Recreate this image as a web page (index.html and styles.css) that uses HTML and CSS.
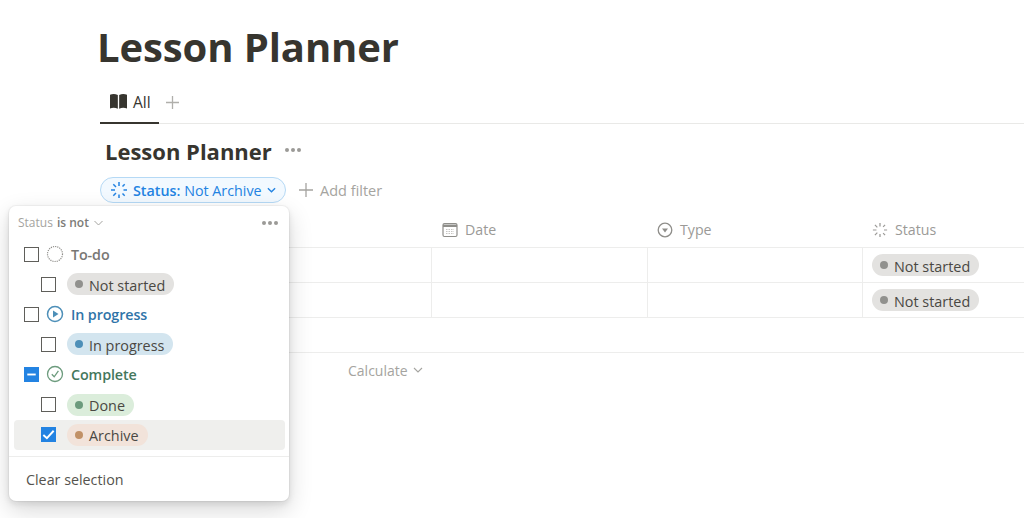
FILE: index.html
```html
<!DOCTYPE html>
<html lang="en">
<head>
  <meta charset="UTF-8" />
  <title>Lesson Planner</title>
  <link rel="stylesheet" href="styles.css">
</head>
<body>
  <div class="page">
    <h1 class="page-title">Lesson Planner</h1>

    <div class="tabs">
      <div class="tab active">
        <svg class="tab-icon" viewBox="0 0 20 18"><path d="M1 1.800C3.600 0.800 6.600 0.800 9.300 2V16.600C6.600 15.400 3.600 15.400 1 16.400ZM19 1.800C16.400 0.800 13.400 0.800 10.700 2V16.600C13.400 15.400 16.400 15.400 19 16.400Z"/></svg>
        <span>All</span>
      </div>
      <svg class="tab-add" viewBox="0 0 14 14"><path d="M7 0V14M0 7H14"/></svg>
    </div>

    <div class="view-head">
      <h2 class="view-title">Lesson Planner</h2>
      <div class="dots"><i></i><i></i><i></i></div>
    </div>

    <div class="filters">
      <div class="filter-pill">
        <svg class="spin-icon" viewBox="0 0 18 18"><path d="M9 1V5M9 13.500V17M1 9H5M13.500 9H17M3.300 3.300L6 6M12.500 12.500L14.700 14.700M3.300 14.700L6 12M12.500 5.500L14.700 3.300"/></svg>
        <span class="filter-text"><b>Status:</b> Not Archive</span>
        <svg class="chev" viewBox="0 0 10 6"><path d="M1 1L5 5L9 1"/></svg>
      </div>
      <div class="add-filter">
        <svg class="add-icon" viewBox="0 0 14 14"><path d="M7 0V14M0 7H14"/></svg>
        <span>Add filter</span>
      </div>
    </div>

    <div class="table">
      <div class="row head">
        <div class="cell name"></div>
        <div class="cell date">
          <svg class="col-icon" viewBox="0 0 16 16"><rect x="1" y="1.500" width="14" height="13" rx="1.500" class="cal"/><path d="M1 2.500H15V5H1Z" class="cal-top"/><path d="M4 7.500H12M4 9.500H12M4 11.500H12" class="cal-grid"/></svg>
          <span>Date</span>
        </div>
        <div class="cell">
          <svg class="col-icon" viewBox="0 0 16 16"><circle cx="8" cy="8" r="6.800" class="ring"/><path d="M5 6.500H11L8 10.500Z" class="fill"/></svg>
          <span>Type</span>
        </div>
        <div class="cell">
          <svg class="col-icon spin-grey" viewBox="0 0 18 18"><path d="M9 1V5M9 13.500V17M1 9H5M13.500 9H17M3.300 3.300L6 6M12.500 12.500L14.700 14.700M3.300 14.700L6 12M12.500 5.500L14.700 3.300"/></svg>
          <span>Status</span>
        </div>
      </div>
      <div class="row">
        <div class="cell name"></div>
        <div class="cell"></div>
        <div class="cell"></div>
        <div class="cell"><span class="tag grey"><i></i>Not started</span></div>
      </div>
      <div class="row">
        <div class="cell name"></div>
        <div class="cell"></div>
        <div class="cell"></div>
        <div class="cell"><span class="tag grey"><i></i>Not started</span></div>
      </div>
      <div class="row blank"></div>
      <div class="calc">
        <span>Calculate</span>
        <svg class="calc-chev" viewBox="0 0 10 6"><path d="M1 1L5 5L9 1"/></svg>
      </div>
    </div>
  </div>

  <!-- status filter menu -->
  <div class="menu">
    <div class="menu-head">
      <div class="menu-label">Status <b>is not</b>
        <svg class="menu-chev" viewBox="0 0 10 6"><path d="M1 1L5 5L9 1"/></svg>
      </div>
      <div class="dots small"><i></i><i></i><i></i></div>
    </div>

    <div class="menu-list">
      <div class="opt">
        <span class="box"></span>
        <svg class="state-icon" viewBox="0 0 18 18"><circle cx="9" cy="9" r="7.500" class="dotted"/></svg>
        <span class="group-name todo">To-do</span>
      </div>
      <div class="opt sub">
        <span class="box"></span>
        <span class="tag grey"><i></i>Not started</span>
      </div>
      <div class="opt">
        <span class="box"></span>
        <svg class="state-icon" viewBox="0 0 18 18"><circle cx="9" cy="9" r="7.500" class="ring-blue"/><path d="M7 5.500L12.500 9L7 12.500Z" class="play"/></svg>
        <span class="group-name prog">In progress</span>
      </div>
      <div class="opt sub">
        <span class="box"></span>
        <span class="tag blue"><i></i>In progress</span>
      </div>
      <div class="opt">
        <span class="box checked">
          <svg viewBox="0 0 16 16"><path d="M3.500 8H12.500"/></svg>
        </span>
        <svg class="state-icon" viewBox="0 0 18 18"><circle cx="9" cy="9" r="7.500" class="ring-green"/><path d="M5.800 9.200L8.200 11.800L12.400 5.800" class="tick"/></svg>
        <span class="group-name done">Complete</span>
      </div>
      <div class="opt sub">
        <span class="box"></span>
        <span class="tag green"><i></i>Done</span>
      </div>
      <div class="opt sub hover">
        <span class="box checked">
          <svg viewBox="0 0 16 16"><path d="M2.500 8.500L6.300 12L13.500 4"/></svg>
        </span>
        <span class="tag brown"><i></i>Archive</span>
      </div>
    </div>

    <div class="menu-foot">Clear selection</div>
  </div>
</body>
</html>
```

FILE: styles.css
```css
html, body {
  margin: 0;
  padding: 0;
  height: 518px;
  overflow: hidden;
  background: #fff;
  font-family: "Open Sans", "Noto Sans", sans-serif;
  color: #37352f;
}
.page {
  padding-left: 100px;
}
.page-title {
  margin: 0 0 0 -3px;
  height: 88px;
  padding-top: 20px;
  box-sizing: border-box;
  font-size: 40px;
  line-height: 54px;
  font-weight: 700;
  letter-spacing: -0.1px;
  color: #37352f;
}
.tabs {
  display: flex;
  align-items: center;
  height: 36px;
  box-sizing: border-box;
  border-bottom: 1px solid #e9e9e7;
}
.tab {
  display: flex;
  align-items: center;
  gap: 5px;
  box-sizing: border-box;
  width: 59px;
  height: 36px;
  padding: 1px 0 6px 9px;
  border-bottom: 2px solid #37352f;
  font-size: 15.500px;
}
.tab-icon {
  width: 19px;
  height: 17px;
  margin-top: -1px;
  fill: #37352f;
}
.tab-add {
  width: 13px;
  height: 13px;
  margin: -6px 0 0 7px;
  stroke: #b0afab;
  stroke-width: 1.400;
  fill: none;
}
.view-head {
  display: flex;
  align-items: center;
  height: 53px;
  padding: 0 0 0 5px;
  box-sizing: border-box;
  gap: 13px;
}
.view-title {
  margin: 0;
  font-size: 22px;
  font-weight: 700;
}
.dots {
  display: flex;
  gap: 2px;
  margin-top: -2px;
}
.dots i {
  width: 4px;
  height: 4px;
  border-radius: 50%;
  background: #9b9a97;
}
.dots.small {
  margin-top: 0;
}
.filters {
  display: flex;
  align-items: center;
  height: 26px;
}
.filter-pill {
  display: flex;
  align-items: center;
  box-sizing: border-box;
  width: 186px;
  height: 26px;
  padding-left: 9px;
  background: #f2f9ff;
  border: 1px solid #b5d9f5;
  border-radius: 13px;
  color: #2383e2;
  font-size: 14.300px;
  white-space: nowrap;
}
.filter-pill b {
  font-weight: 600;
}
.spin-icon {
  flex: none;
  width: 18px;
  height: 18px;
  margin-right: 5px;
  stroke: #2383e2;
  stroke-width: 1.500;
  fill: none;
}
.chev {
  flex: none;
  width: 9px;
  height: 6px;
  margin-left: 5px;
  stroke: #2383e2;
  stroke-width: 1.500;
  fill: none;
}
.add-filter {
  display: flex;
  align-items: center;
  gap: 7px;
  margin-left: 13px;
  color: #a5a4a0;
  font-size: 14.500px;
}
.add-icon {
  width: 14px;
  height: 14px;
  stroke: #a5a4a0;
  stroke-width: 1.300;
  fill: none;
}
.table {
  margin-top: 9px;
}
.row {
  display: grid;
  grid-template-columns: 331px 216px 215px 1fr;
  height: 35px;
  box-sizing: border-box;
  border-bottom: 1px solid #ededec;
}
.row.head {
  height: 36px;
}
.row.blank {
  display: block;
}
.cell {
  display: flex;
  align-items: center;
  padding-left: 9px;
  border-left: 1px solid #ededec;
  font-size: 14px;
}
.cell.name {
  border-left: none;
}
.head .cell {
  gap: 7px;
  padding-left: 10px;
  border-left: none;
  color: #9b9a97;
  font-size: 14.200px;
}
.head .cell.date {
  padding-left: 11px;
}
.col-icon {
  flex: none;
  width: 16px;
  height: 16px;
}
.cal {
  fill: none;
  stroke: #8f8e8a;
  stroke-width: 1.200;
}
.cal-top {
  fill: #8f8e8a;
}
.cal-grid {
  stroke: #c6c5c2;
  stroke-width: 1;
  stroke-dasharray: 1.500 1;
}
.ring {
  fill: none;
  stroke: #8f8e8a;
  stroke-width: 1.300;
}
.fill {
  fill: #8f8e8a;
}
.spin-grey {
  stroke: #9b9a97;
  stroke-width: 1.400;
  fill: none;
}
.tag {
  display: inline-flex;
  align-items: center;
  box-sizing: border-box;
  height: 22px;
  padding: 2px 9px 0 8px;
  border-radius: 11px;
  font-size: 14.400px;
  color: #4a4843;
  white-space: nowrap;
}
.tag i {
  flex: none;
  width: 8px;
  height: 8px;
  margin: -2px 6px 0 0;
  border-radius: 50%;
}
.tag.grey { background: #e3e2e0; }
.tag.grey i { background: #91918e; }
.tag.blue { background: #d3e5ef; }
.tag.blue i { background: #4d8fb8; }
.tag.green { background: #dbeddb; }
.tag.green i { background: #6c9b7d; }
.tag.brown { background: #f2e3da; }
.tag.brown i { background: #c19167; }
.calc {
  display: flex;
  align-items: center;
  height: 34px;
  padding-left: 248px;
  gap: 5px;
  color: #a5a4a0;
  font-size: 14px;
}
.calc-chev {
  width: 10px;
  height: 6px;
  stroke: #a5a4a0;
  stroke-width: 1.100;
  fill: none;
}
.menu {
  position: absolute;
  left: 9px;
  top: 206px;
  width: 280px;
  height: 295px;
  box-sizing: border-box;
  background: #fff;
  border-radius: 7px;
  box-shadow: 0 0 0 1px rgba(15, 15, 15, 0.04), 0 3px 6px rgba(15, 15, 15, 0.1), 0 9px 24px rgba(15, 15, 15, 0.16);
}
.menu-head {
  display: flex;
  align-items: center;
  justify-content: space-between;
  height: 33px;
  padding: 0 11px 0 9px;
}
.menu-label {
  display: flex;
  align-items: center;
  gap: 4px;
  font-size: 12px;
  color: #a5a4a0;
}
.menu-label b {
  font-weight: 600;
  color: #7d7c78;
}
.menu-chev {
  width: 11px;
  height: 6px;
  stroke: #a5a4a0;
  stroke-width: 1;
  fill: none;
}
.menu-list {
  display: flex;
  flex-direction: column;
  padding: 0 4px 0 5px;
}
.opt {
  display: flex;
  align-items: center;
  height: 30.100px;
  padding-left: 10px;
  border-radius: 4px;
}
.opt.sub {
  padding-left: 27px;
}
.opt.hover {
  background: #efefed;
}
.box {
  flex: none;
  display: block;
  box-sizing: border-box;
  width: 15px;
  height: 15px;
  margin-right: 7px;
  border: 1.500px solid #5f5e5a;
}
.opt.sub .box {
  margin-right: 11px;
}
.box.checked {
  background: #2383e2;
  border: none;
}
.box svg {
  display: block;
  width: 15px;
  height: 15px;
  stroke: #fff;
  stroke-width: 2;
  fill: none;
}
.state-icon {
  flex: none;
  width: 18px;
  height: 18px;
  margin-right: 7px;
}
.dotted {
  fill: none;
  stroke: #8f8e8a;
  stroke-width: 1.200;
  stroke-dasharray: 1.200 1;
}
.ring-blue {
  fill: none;
  stroke: #4d8fb8;
  stroke-width: 1.500;
}
.play {
  fill: #4d8fb8;
}
.ring-green {
  fill: none;
  stroke: #6c9b7d;
  stroke-width: 1.300;
}
.tick {
  fill: none;
  stroke: #6c9b7d;
  stroke-width: 1.300;
}
.group-name {
  font-size: 14.300px;
  font-weight: 600;
  letter-spacing: -0.1px;
}
.group-name.todo { color: #787774; }
.group-name.prog { color: #2f74a8; }
.group-name.done { color: #44775c; }
.menu-foot {
  margin-top: 6px;
  padding: 13px 0 0 17px;
  border-top: 1px solid #ededec;
  font-size: 14.300px;
  color: #55534e;
}
```
